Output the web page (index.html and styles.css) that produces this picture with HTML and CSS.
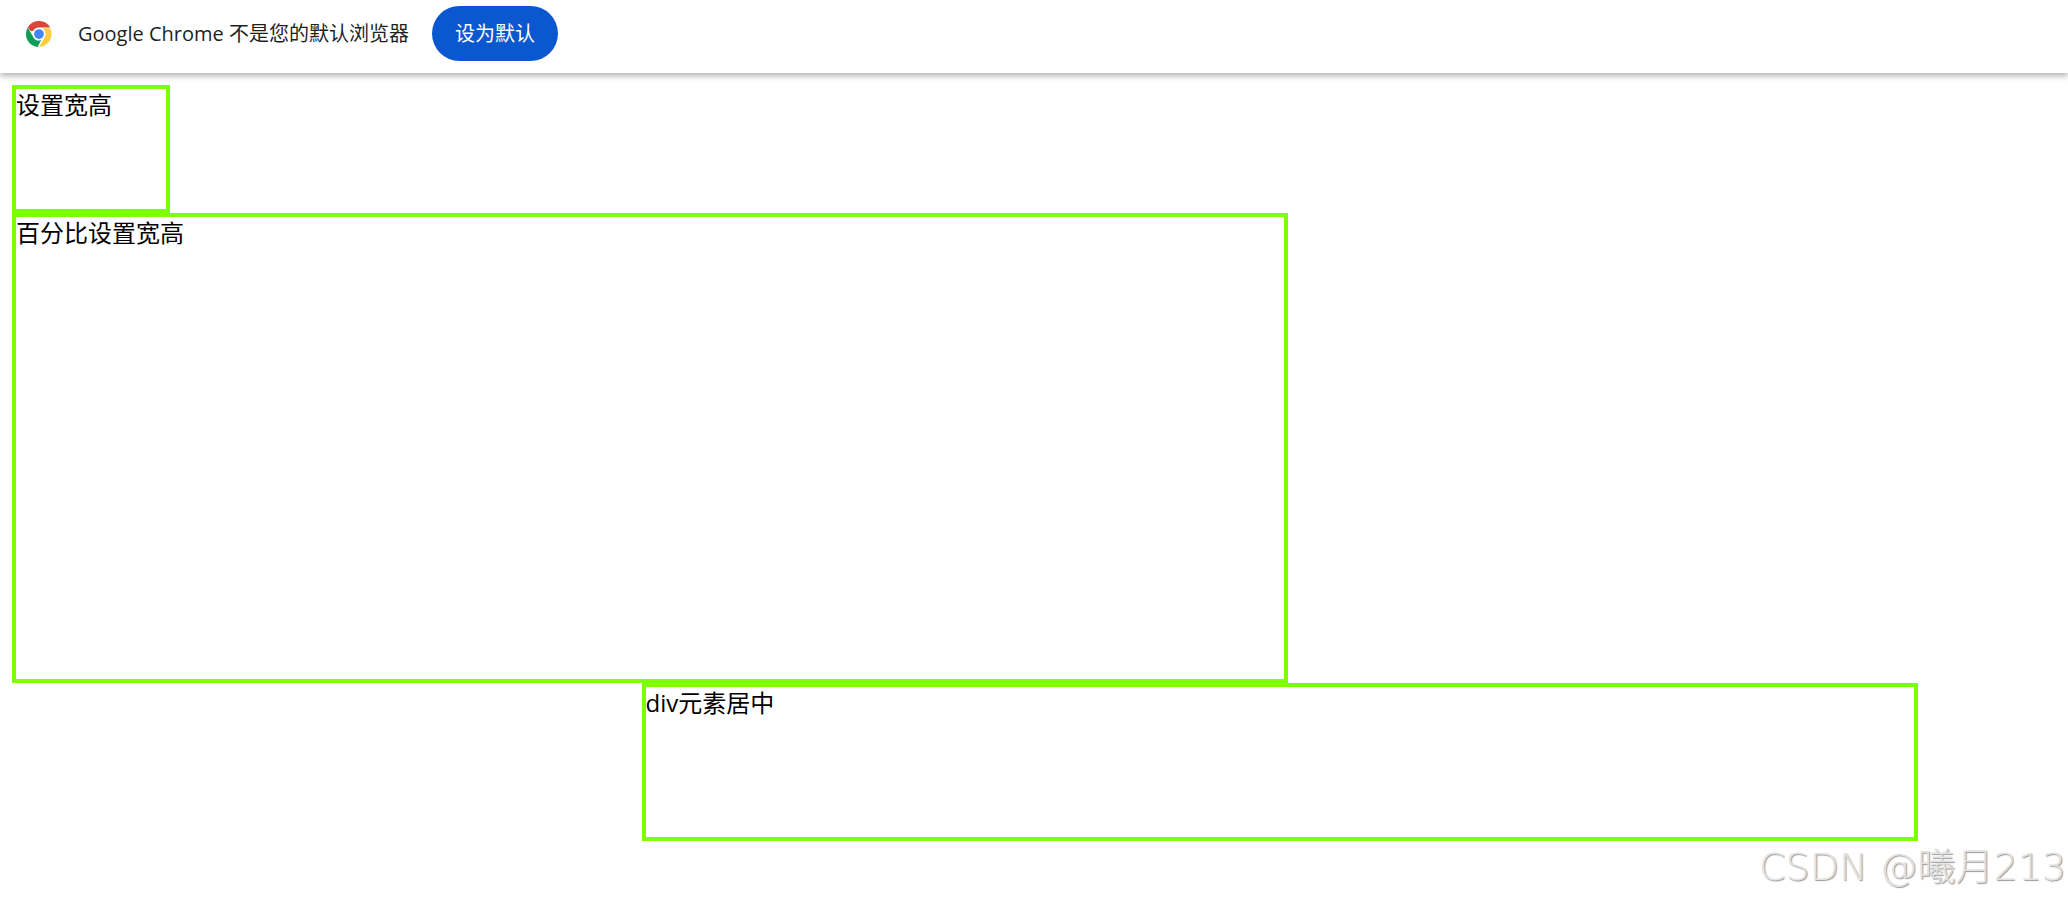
FILE: index.html
```
<!doctype html>
<html lang="zh-CN">
  <head>
    <meta charset="UTF-8" />
    <meta name="viewport" content="width=device-width, initial-scale=1.0" />
    <title>div宽高与居中</title>
    <link rel="stylesheet" href="styles.css">
  </head>
  <body>
    <header class="infobar">
      <svg class="logo" viewBox="0 0 48 48" aria-hidden="true">
        <circle cx="24" cy="24" r="24" fill="#fff" />
        <path d="M3.2 12A24 24 0 0 1 44.8 12H24A12 12 0 0 0 13.6 18L9 19Z" fill="#db4437" />
        <path d="M44.8 13.5A24 24 0 0 1 24 48L34.4 30A12 12 0 0 0 30 13.5Z" fill="#ffcd40" />
        <path d="M3.2 12L13.6 30A12 12 0 0 0 28 35.3L21.5 48A24 24 0 0 1 3.2 12Z" fill="#0f9d58" />
        <circle cx="24" cy="24" r="11" fill="#fff" />
        <circle cx="24" cy="24" r="9" fill="#4285f4" />
      </svg>
      <span class="message">Google Chrome 不是您的默认浏览器</span>
      <button class="set-default" type="button">设为默认</button>
    </header>
    <main>
      <div class="box fixed">设置宽高</div>
      <div class="box percent">百分比设置宽高</div>
      <div class="box center">div元素居中</div>
    </main>
    <div class="watermark">CSDN @曦月213</div>
  </body>
</html>
```
FILE: styles.css
```
body {
  margin: 0;
  background: #fff;
  color: #000;
  font-family: "Open Sans", "Noto Sans CJK SC", sans-serif;
  font-size: 24px;
  line-height: 32px;
}

.infobar {
  display: flex;
  align-items: center;
  box-sizing: border-box;
  height: 73px;
  padding: 0 26px 6px;
  box-shadow: 0 3px 6px rgba(0, 0, 0, 0.3);
  color: #1f1f1f;
  font-size: 20px;
}
.logo {
  width: 26px;
  height: 26px;
  margin-right: 26px;
}
.message {
  white-space: nowrap;
}
.set-default {
  height: 55px;
  margin-left: 23px;
  padding: 0 23px;
  border: none;
  border-radius: 28px;
  background: #0b57d0;
  color: #fff;
  font: inherit;
  cursor: pointer;
}

main {
  margin: 12px;
}
.box {
  border: 4px solid #7cff00;
}
.fixed {
  width: 150px;
  height: 120px;
}
.percent {
  width: 62.04%;
  height: 462px;
}
.center {
  width: 62.04%;
  height: 150px;
  margin-left: 30.8%;
}

.watermark {
  position: absolute;
  right: 2px;
  bottom: 10px;
  color: #e2e2e2;
  font-family: "DejaVu Sans", "Noto Sans CJK SC", sans-serif;
  font-size: 38px;
  font-weight: 200;
  line-height: 52px;
  text-shadow: 1px 1px 1px #999;
}
```
